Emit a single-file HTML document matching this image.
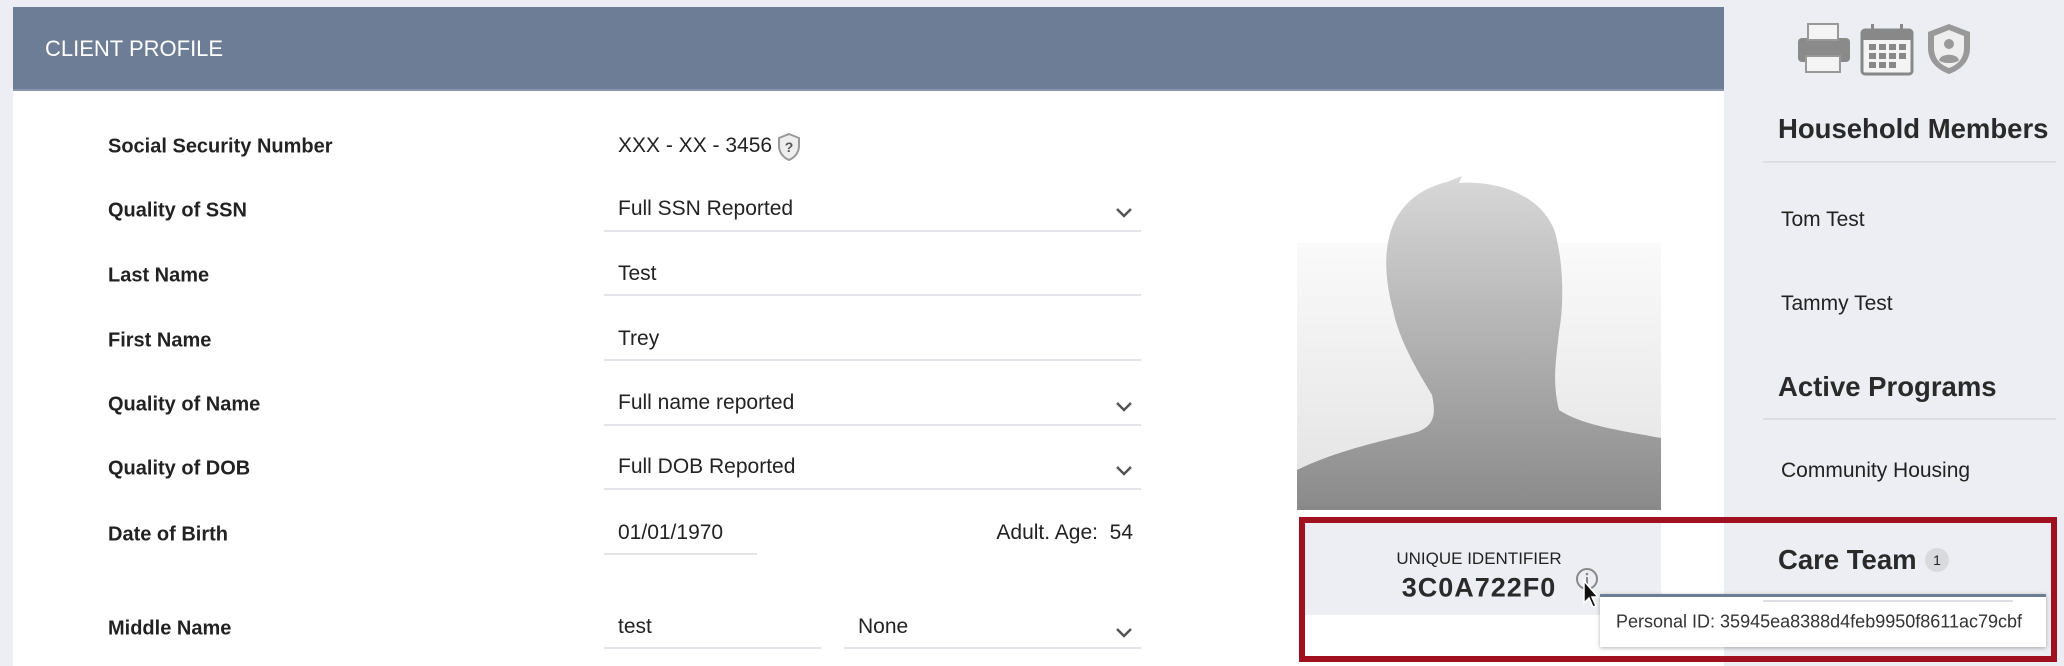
<!DOCTYPE html>
<html><head><meta charset="utf-8"><style>
*{margin:0;padding:0;box-sizing:border-box}
body{width:2064px;height:666px;background:#eceef3;font-family:"Liberation Sans",sans-serif;position:relative;overflow:hidden;color:#222}
.a{position:absolute;white-space:nowrap}
.main{position:absolute;left:13px;top:7px;width:1711px;height:659px;background:#fff}
.hdr{position:absolute;left:13px;top:7px;width:1711px;height:84px;background:#6e7d96;border-bottom:2px solid #8a97ab}
.lbl{position:absolute;left:108px;font-size:20px;font-weight:bold;color:#222;transform:translateY(-50%)}
.val{position:absolute;left:618px;font-size:21px;color:#222;transform:translateY(-50%)}
.ul{position:absolute;height:2px;background:#e3e5ea}
.chev{position:absolute;left:1114px;width:20px;height:12px}
.side{position:absolute;left:1724px;top:0;width:340px;height:666px;background:#eceef3}
.h2{position:absolute;left:1778px;font-size:27.5px;font-weight:bold;color:#2a2a2a;transform:translateY(-50%)}
.it{position:absolute;left:1781px;font-size:21px;color:#222;transform:translateY(-50%)}
.hl{position:absolute;left:1763px;width:293px;height:2px;background:#dcdee3}
</style></head><body>
<div class="main"></div>
<div class="hdr"></div>
<div class="a" style="left:45px;top:49px;transform:translateY(-50%);color:#fff;font-size:22px">CLIENT PROFILE</div>

<div class="lbl" style="top:147px">Social Security Number</div>
<div class="val" style="top:146px">XXX - XX - 3456</div>
<svg class="a" style="left:776px;top:132px" width="26" height="30" viewBox="0 0 26 30"><path d="M13 2 L23 6 V14 C23 21 18 26 13 28 C8 26 3 21 3 14 V6 Z" fill="#eee" stroke="#999" stroke-width="2"/><text x="13" y="20" font-size="14" font-weight="bold" text-anchor="middle" fill="#555" font-family="Liberation Sans">?</text></svg>

<div class="lbl" style="top:211px">Quality of SSN</div>
<div class="val" style="top:209px">Full SSN Reported</div>
<div class="ul" style="left:604px;width:537px;top:230px"></div>
<div class="lbl" style="top:276px">Last Name</div>
<div class="val" style="top:274px">Test</div>
<div class="ul" style="left:604px;width:537px;top:294px"></div>
<div class="lbl" style="top:341px">First Name</div>
<div class="val" style="top:339px">Trey</div>
<div class="ul" style="left:604px;width:537px;top:359px"></div>
<div class="lbl" style="top:405px">Quality of Name</div>
<div class="val" style="top:403px">Full name reported</div>
<div class="ul" style="left:604px;width:537px;top:424px"></div>
<div class="lbl" style="top:469px">Quality of DOB</div>
<div class="val" style="top:467px">Full DOB Reported</div>
<div class="ul" style="left:604px;width:537px;top:488px"></div>
<div class="lbl" style="top:535px">Date of Birth</div>
<div class="val" style="top:533px">01/01/1970</div>
<div class="val" style="left:auto;right:931px;top:533px">Adult. Age:&nbsp; 54</div>
<div class="ul" style="left:604px;width:153px;top:553px"></div>
<div class="lbl" style="top:629px">Middle Name</div>
<div class="val" style="top:627px">test</div>
<div class="val" style="left:858px;top:627px">None</div>
<div class="ul" style="left:604px;width:217px;top:647px"></div>
<div class="ul" style="left:844px;width:297px;top:647px"></div>
<svg class="chev" style="top:207px" viewBox="0 0 20 12"><path d="M3 2 L10 9 L17 2" fill="none" stroke="#555" stroke-width="2.5"/></svg>
<svg class="chev" style="top:401px" viewBox="0 0 20 12"><path d="M3 2 L10 9 L17 2" fill="none" stroke="#555" stroke-width="2.5"/></svg>
<svg class="chev" style="top:465px" viewBox="0 0 20 12"><path d="M3 2 L10 9 L17 2" fill="none" stroke="#555" stroke-width="2.5"/></svg>
<svg class="chev" style="top:627px" viewBox="0 0 20 12"><path d="M3 2 L10 9 L17 2" fill="none" stroke="#555" stroke-width="2.5"/></svg>

<svg class="a" style="left:1297px;top:170px" width="364" height="340" viewBox="0 0 364 340">
<defs><linearGradient id="bg" x1="0" y1="0" x2="0" y2="1"><stop offset="0" stop-color="#fafafa"/><stop offset="1" stop-color="#e2e2e2"/></linearGradient>
<linearGradient id="fg" x1="0" y1="0" x2="0" y2="1"><stop offset="0" stop-color="#d8d8d8"/><stop offset="1" stop-color="#8a8a8a"/></linearGradient></defs>
<rect x="0" y="73" width="364" height="267" fill="url(#bg)"/>
<path d="M150 12 L165 6 L162 13 C200 10 245 25 258 62 C268 100 266 140 262 162 C259 190 255 212 262 240 C285 255 320 260 364 268 L364 340 L0 340 L0 300 C40 280 90 270 120 262 C140 255 138 240 135 225 C120 200 102 170 96 140 C88 110 86 80 96 55 C106 32 125 18 150 12 Z" fill="url(#fg)"/>
<rect x="0" y="336" width="364" height="4" fill="#888"/>
</svg>

<div class="side"></div>
<div class="a" style="left:1303px;top:517px;width:358px;height:98px;background:#eceef3"></div>
<div class="a" style="left:1299px;top:517px;width:758px;height:145px;border:6px solid #a0101e"></div>
<div class="a" style="left:1305px;top:615px;width:356px;height:41px;background:#fff"></div>
<div class="a" style="left:1479px;top:559px;transform:translate(-50%,-50%);font-size:17px;color:#222">UNIQUE IDENTIFIER</div>
<div class="a" style="left:1479px;top:588px;transform:translate(-50%,-50%);font-size:27px;font-weight:bold;color:#2a2a2a;letter-spacing:1px">3C0A722F0</div>
<svg class="a" style="left:1575px;top:567px" width="26" height="44" viewBox="0 0 26 44"><circle cx="12" cy="12" r="10" fill="none" stroke="#888" stroke-width="2"/><rect x="11" y="10" width="2" height="8" fill="#888"/><circle cx="12" cy="7" r="1.3" fill="#888"/><path d="M9 14 L9 36 L14 31 L18 40 L21 39 L17 30 L23 30 Z" fill="#111" stroke="#fff" stroke-width="1.5"/></svg>
<div class="a" style="left:1600px;top:594px;width:446px;height:53px;background:#fff;border-top:3px solid #6e7d96;box-shadow:0 1px 4px rgba(0,0,0,.3)"></div>
<div class="a" style="left:1616px;top:622px;transform:translateY(-50%);font-size:18px;color:#333">Personal ID: 35945ea8388d4feb9950f8611ac79cbf</div>

<svg class="a" style="left:1796px;top:22px" width="180" height="54" viewBox="0 0 180 54">
<rect x="2" y="16" width="52" height="24" rx="4" fill="#8a8a8a"/>
<rect x="12" y="2" width="30" height="16" fill="#f4f4f4" stroke="#999" stroke-width="2"/>
<rect x="10" y="34" width="34" height="16" fill="#f4f4f4" stroke="#999" stroke-width="2"/>
<rect x="66" y="8" width="50" height="44" rx="3" fill="#f4f4f4" stroke="#888" stroke-width="3"/>
<rect x="66" y="8" width="50" height="10" fill="#888"/>
<rect x="75" y="2" width="3" height="10" fill="#888"/><rect x="104" y="2" width="3" height="10" fill="#888"/>
<g fill="#888"><rect x="73" y="22" width="7" height="6"/><rect x="83" y="22" width="7" height="6"/><rect x="93" y="22" width="7" height="6"/><rect x="103" y="22" width="7" height="6"/><rect x="73" y="31" width="7" height="6"/><rect x="83" y="31" width="7" height="6"/><rect x="93" y="31" width="7" height="6"/><rect x="103" y="31" width="7" height="6"/><rect x="73" y="40" width="7" height="6"/><rect x="83" y="40" width="7" height="6"/><rect x="93" y="40" width="7" height="6"/></g>
<path d="M153 2 L174 10 V26 C174 40 164 48 153 52 C142 48 132 40 132 26 V10 Z" fill="#999"/>
<path d="M153 8 L168 14 V26 C168 37 161 43 153 46 C145 43 138 37 138 26 V14 Z" fill="#eee"/>
<circle cx="153" cy="22" r="5" fill="#999"/><path d="M143 38 C145 31 161 31 163 38 C160 42 146 42 143 38 Z" fill="#999"/>
</svg>

<div class="h2" style="top:129px">Household Members</div>
<div class="hl" style="top:161px"></div>
<div class="it" style="top:220px">Tom Test</div>
<div class="it" style="top:304px">Tammy Test</div>
<div class="h2" style="top:387px">Active Programs</div>
<div class="hl" style="top:418px"></div>
<div class="it" style="top:471px">Community Housing</div>
<div class="h2" style="top:560px">Care Team</div>
<div class="a" style="left:1925px;top:548px;width:24px;height:24px;border-radius:50%;background:#d8dade;font-size:14px;text-align:center;line-height:24px">1</div>
<div class="hl" style="top:600px;width:250px"></div>
</body></html>
